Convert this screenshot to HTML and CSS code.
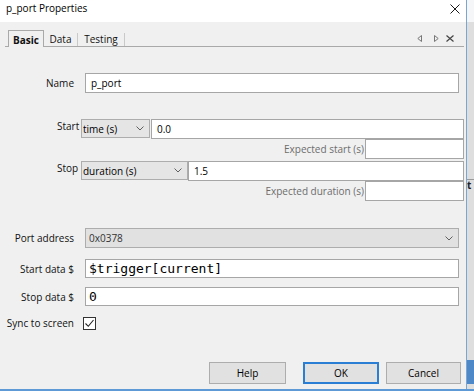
FILE: index.html
```html
<!DOCTYPE html>
<html lang="en">
<head>
  <meta charset="UTF-8">
  <title>p_port Properties</title>
  <link rel="stylesheet" href="styles.css">
</head>
<body>
  <div class="desk">
    <div class="dialog">
      <div class="titlebar">
        <span class="title">p_port Properties</span>
        <svg class="close" width="10" height="10" viewBox="0 0 10 10">
          <path d="M0.5 0.5L9.5 9.5M9.5 0.5L0.5 9.5" stroke="#1a1a1a" stroke-width="1" fill="none"/>
        </svg>
      </div>

      <div class="tabbar">
        <div class="tab active">Basic</div>
        <div class="tab tab-data">Data</div>
        <div class="tab tab-testing">Testing</div>
        <div class="tab-tools">
          <svg width="5" height="7" viewBox="0 0 5 7"><path d="M4.5 0.5L0.8 3.5L4.5 6.5Z" fill="none" stroke="#777" stroke-width="1"/></svg>
          <svg class="next" width="5" height="7" viewBox="0 0 5 7"><path d="M0.5 0.5L4.2 3.5L0.5 6.5Z" fill="none" stroke="#777" stroke-width="1"/></svg>
          <svg class="shut" width="8" height="7" viewBox="0 0 8 7"><path d="M0.5 0.5L7.5 6.5M7.5 0.5L0.5 6.5" stroke="#444" stroke-width="1.2" fill="none"/></svg>
        </div>
      </div>

      <div class="pane">
        <div class="row name-row">
          <label class="lbl" for="name">Name</label>
          <input class="field wide" id="name" type="text" value="p_port">
        </div>

        <div class="timing">
          <div class="row trow">
            <label class="side-lbl" for="start">Start</label>
            <select class="combo unit-start"><option>time (s)</option></select>
            <input class="field grow gap1" id="start" type="text" value="0.0">
          </div>
          <div class="row expected">
            <label class="dim" for="exp-start">Expected start (s)</label>
            <input class="field short" id="exp-start" type="text" value="">
          </div>
          <div class="row trow stop-row">
            <label class="side-lbl" for="stop">Stop</label>
            <select class="combo unit-stop"><option>duration (s)</option></select>
            <input class="field grow" id="stop" type="text" value="1.5">
          </div>
          <div class="row expected">
            <label class="dim" for="exp-dur">Expected duration (s)</label>
            <input class="field short" id="exp-dur" type="text" value="">
          </div>
        </div>

        <div class="row port-row">
          <label class="lbl">Port address</label>
          <select class="combo port wide" disabled><option>0x0378</option></select>
        </div>
        <div class="row data-row first">
          <label class="lbl" for="start-data">Start data $</label>
          <input class="field wide mono" id="start-data" type="text" value="$trigger[current]">
        </div>
        <div class="row data-row">
          <label class="lbl" for="stop-data">Stop data $</label>
          <input class="field wide mono" id="stop-data" type="text" value="0">
        </div>
        <div class="row sync-row">
          <label class="lbl" for="sync">Sync to screen</label>
          <input class="check" id="sync" type="checkbox" checked>
        </div>
      </div>

      <div class="buttons">
        <button class="btn help">Help</button>
        <button class="btn ok">OK</button>
        <button class="btn cancel">Cancel</button>
      </div>
    </div>

    <div class="behind">
      <div class="b-top"></div>
      <div class="b-gap"></div>
      <div class="b-mark">t</div>
      <div class="b-fill"></div>
      <div class="b-blue"></div>
      <div class="b-foot"></div>
    </div>
  </div>
  <div class="edge"></div>
</body>
</html>
```

FILE: styles.css
```css
* {
  box-sizing: border-box;
}

body {
  margin: 0;
  width: 474px;
  height: 391px;
  overflow: hidden;
  background-color: #e6e6e6;
  font-family: 'Open Sans', sans-serif;
  font-size: 10px;
  color: #111;
}

.desk {
  display: flex;
  height: 389px;
}

.dialog {
  width: 467px;
  display: flex;
  flex-direction: column;
  background-color: #f0f0f0;
  border-right: 1px solid #7aa6d3;
}

/* title bar */

.titlebar {
  height: 22px;
  display: flex;
  justify-content: space-between;
  align-items: flex-start;
  padding: 1px 6px 0 6px;
  background-color: #ffffff;
}

.title {
  line-height: 14px;
  color: #000;
}

.close {
  margin-top: 3px;
}

/* tabs */

.tabbar {
  display: flex;
  align-items: flex-end;
  height: 17px;
  margin: 8px 2px 0 5px;
  padding: 0 10px 0 3px;
  border-bottom: 1px solid #a9a9a9;
}

.tab {
  height: 13px;
  line-height: 13px;
  text-align: center;
  border-right: 1px solid #c9c9c9;
  color: #111;
}

.tab.active {
  width: 36px;
  height: 17px;
  margin-bottom: -1px;
  padding-top: 3px;
  font-weight: bold;
  background-color: #f0f0f0;
  border: 1px solid #a9a9a9;
  border-bottom: none;
}

.tab-data {
  width: 34px;
}

.tab-testing {
  width: 47px;
}

.tab-tools {
  display: flex;
  align-self: flex-start;
  margin: 5px 0 0 auto;
}

.tab-tools .next {
  margin-left: 12px;
}

.tab-tools .shut {
  margin-left: 7px;
}

/* form */

.pane {
  padding: 26px 2px 0 0;
}

.row {
  display: flex;
  align-items: center;
}

.lbl {
  width: 74px;
  text-align: right;
  margin-right: 11px;
}

.field {
  height: 20px;
  margin: 0;
  padding: 0 5px;
  border: 1px solid #a6a6a6;
  border-radius: 0;
  background-color: #ffffff;
  font-family: 'Open Sans', sans-serif;
  font-size: 10px;
  color: #000;
  outline: none;
}

.wide {
  width: 374px;
}

.grow {
  flex: 1;
}

.gap1 {
  margin-left: 1px;
}

.short {
  width: 99px;
}

.combo {
  -webkit-appearance: none;
  appearance: none;
  height: 19px;
  margin: 0;
  padding: 0 0 0 1px;
  border: 1px solid #adadad;
  border-radius: 0;
  background: #e5e5e5 url("data:image/svg+xml,%3Csvg xmlns='http://www.w3.org/2000/svg' width='8' height='5'%3E%3Cpath d='M0.5 0.5L4 4L7.5 0.5' fill='none' stroke='%23606060'/%3E%3C/svg%3E") no-repeat right 5px center;
  font-family: 'Open Sans', sans-serif;
  font-size: 10px;
  color: #000;
}

.timing {
  margin-top: 26px;
}

.trow {
  align-items: flex-start;
  padding-left: 57px;
}

.side-lbl {
  width: 24px;
  line-height: 14px;
}

.unit-start {
  width: 69px;
}

.unit-stop {
  width: 107px;
}

.stop-row {
  margin-top: 2px;
}

.expected {
  justify-content: flex-end;
}

.dim {
  color: #6d6d6d;
  margin-right: 1px;
}

.port-row {
  margin-top: 27px;
}

.combo.port {
  height: 20px;
  padding-left: 3px;
  background-color: #e1e1e1;
  color: #333;
  opacity: 1;
}

.data-row {
  margin-top: 9px;
}

.data-row.first {
  margin-top: 11px;
}

.data-row .field {
  height: 19px;
}

.mono {
  padding-left: 3px;
  font-family: 'DejaVu Sans Mono', monospace;
  font-size: 13px;
}

.sync-row {
  margin-top: 10px;
}

.sync-row .lbl {
  margin-right: 9px;
}

.check {
  -webkit-appearance: none;
  appearance: none;
  width: 13px;
  height: 13px;
  margin: 0;
  border: 1px solid #333;
  background: #fff url("data:image/svg+xml,%3Csvg xmlns='http://www.w3.org/2000/svg' width='11' height='11'%3E%3Cpath d='M1.5 5.5L4.3 8.3L9.5 2' fill='none' stroke='%23222' stroke-width='1.1'/%3E%3C/svg%3E") no-repeat center;
}

/* buttons */

.buttons {
  display: flex;
  justify-content: flex-end;
  margin-top: auto;
  padding: 0 5px 5px 0;
}

.btn {
  height: 22px;
  padding: 0;
  border: 1px solid #adadad;
  background-color: #e1e1e1;
  font-family: 'Open Sans', sans-serif;
  font-size: 10px;
  color: #000;
}

.help {
  width: 77px;
  margin-right: 17px;
}

.ok {
  width: 76px;
  margin-right: 7px;
  border: 2px solid #2a7fd4;
}

.cancel {
  width: 75px;
}

/* window behind the dialog */

.behind {
  flex: 1;
  display: flex;
  flex-direction: column;
  background-color: #dedede;
}

.b-top {
  height: 22px;
  background-color: #f4f6f8;
}

.b-gap {
  height: 157px;
}

.b-fill {
  flex: 1;
}

.b-mark {
  height: 12px;
  border-top: 1px solid #9a9a9a;
  font-size: 10px;
  font-weight: bold;
  line-height: 10px;
  color: #222;
}

.b-blue {
  height: 24px;
  background-color: #4f88c6;
}

.b-foot {
  height: 5px;
}

.edge {
  height: 2px;
  background-color: #5e9bd6;
}
```
